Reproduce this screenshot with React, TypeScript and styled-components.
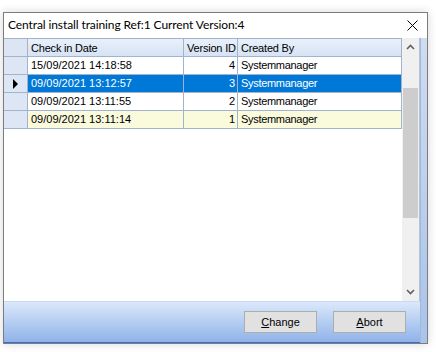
import React from "react";
import styled, { createGlobalStyle } from "styled-components";

const Global = createGlobalStyle`
  html, body { margin: 0; padding: 0; background: #ffffff; }
  body { width: 436px; height: 352px; overflow: hidden; }
  * { box-sizing: border-box; }
`;

const Screen = styled.div`
  padding: 12px 0 0 3px;
`;

const Window = styled.div`
  width: 425px;
  height: 332px;
  border: 1px solid #7d7d7d;
  background: #ffffff;
  box-shadow: 0 0 9px rgba(0, 0, 0, 0.16);
  display: flex;
  flex-direction: column;
`;

const TitleBar = styled.div`
  height: 25px;
  display: flex;
  align-items: center;
  justify-content: space-between;
  padding: 0 9px 0 4px;
  font-family: Lato, "Liberation Sans", sans-serif;
  font-size: 12px;
  letter-spacing: -0.1px;
  color: #000;
`;

const Title = styled.span`
  line-height: 1;
  padding-bottom: 1px;
`;

const Body = styled.div`
  flex: 1;
  display: flex;
`;

const Main = styled.div`
  width: 416px;
  display: flex;
  flex-direction: column;
`;

const RightStrip = styled.div`
  flex: 1;
  background: linear-gradient(#cfdcf0, #a9c3ea);
  border-left: 1px solid #a4b8d8;
`;

const GridArea = styled.div`
  height: 263px;
  display: flex;
  background: #ffffff;
`;

const Table = styled.div`
  width: 398px;
  display: grid;
  grid-template-columns: 24px 156px 54px 164px;
  grid-auto-rows: 18px;
  grid-template-rows: 19px;
  align-content: start;
  font-family: "Liberation Sans", Arial, sans-serif;
  font-size: 11px;
`;

const HeadCell = styled.div<{ $corner?: boolean }>`
  border-top: 1px solid #a3b3cb;
  border-right: 1px solid #a3b3cb;
  border-bottom: 1px solid #a3b3cb;
  background: ${(p) => (p.$corner ? "#dbe5f3" : "linear-gradient(#e9f0fa, #d6e3f4)")};
  display: flex;
  align-items: center;
  padding: 0 2px 0 3px;
  color: #000;
  white-space: nowrap;
  letter-spacing: -0.2px;
`;

type RowKind = "normal" | "selected" | "yellow";

const RowHeader = styled.div`
  border-right: 1px solid #a3b3cb;
  border-bottom: 1px solid #a3b3cb;
  background: #dce6f4;
  display: flex;
  align-items: center;
  padding-left: 9px;
`;

const Cell = styled.div<{ $kind: RowKind; $right?: boolean; $tight?: boolean }>`
  border-right: 1px solid #a3b3cb;
  border-bottom: 1px solid #a3b3cb;
  background: ${(p) =>
    p.$kind === "selected" ? "#0078d7" : p.$kind === "yellow" ? "#fafadc" : "#ffffff"};
  color: ${(p) => (p.$kind === "selected" ? "#ffffff" : "#000000")};
  display: flex;
  align-items: center;
  justify-content: ${(p) => (p.$right ? "flex-end" : "flex-start")};
  padding: 0 2px 1px 3px;
  white-space: nowrap;
  letter-spacing: ${(p) => (p.$tight ? "-0.3px" : "0")};
`;

const Arrow = styled.span`
  width: 0;
  height: 0;
  border-top: 5px solid transparent;
  border-bottom: 5px solid transparent;
  border-left: 5px solid #000;
`;

const ScrollBar = styled.div`
  width: 18px;
  background: #f0f0f0;
  display: flex;
  flex-direction: column;
  border-right: 1px solid #b3c4de;
`;

const ScrollButton = styled.div`
  height: 18px;
  display: flex;
  align-items: center;
  justify-content: center;
`;

const Track = styled.div`
  flex: 1;
  display: flex;
  flex-direction: column;
  padding: 32px 1px 0 1px;
`;

const Thumb = styled.div`
  height: 130px;
  background: #cdcdcd;
`;

const BottomPanel = styled.div`
  height: 42px;
  border-top: 1px solid #c9d9f1;
  border-bottom: 1px solid #3a6ad2;
  background: linear-gradient(#dbe8fb, #8fb3e8);
  display: flex;
  justify-content: flex-end;
  align-items: flex-start;
  gap: 16px;
  padding: 9px 14px 0 0;
`;

const Button = styled.button`
  width: 73px;
  height: 22px;
  background: #e1e1e1;
  border: 1px solid #adadad;
  font-family: "Liberation Sans", Arial, sans-serif;
  font-size: 11px;
  color: #000;
  padding: 0 0 1px 0;
  margin: 0;
  display: flex;
  align-items: center;
  justify-content: center;
`;

const rows: { date: string; id: number; by: string; kind: RowKind }[] = [
  { date: "15/09/2021 14:18:58", id: 4, by: "Systemmanager", kind: "normal" },
  { date: "09/09/2021 13:12:57", id: 3, by: "Systemmanager", kind: "selected" },
  { date: "09/09/2021 13:11:55", id: 2, by: "Systemmanager", kind: "normal" },
  { date: "09/09/2021 13:11:14", id: 1, by: "Systemmanager", kind: "yellow" },
];

const Chevron = ({ up }: { up?: boolean }) => (
  <svg width="9" height="6" viewBox="0 0 9 6">
    <path
      d={up ? "M1 5 L4.5 1.5 L8 5" : "M1 1 L4.5 4.5 L8 1"}
      fill="none"
      stroke="#606060"
      strokeWidth="1.6"
    />
  </svg>
);

export default function App() {
  return (
    <>
      <Global />
      <Screen>
        <Window>
          <TitleBar>
            <Title>Central install training Ref:1 Current Version:4</Title>
            <svg width="11" height="11" viewBox="0 0 11 11">
              <path d="M0.5 0.5 L10.5 10.5 M10.5 0.5 L0.5 10.5" stroke="#000" strokeWidth="1" />
            </svg>
          </TitleBar>
          <Body>
            <Main>
              <GridArea>
                <Table>
                  <HeadCell $corner />
                  <HeadCell>Check in Date</HeadCell>
                  <HeadCell>Version ID</HeadCell>
                  <HeadCell>Created By</HeadCell>
                  {rows.map((r) => (
                    <React.Fragment key={r.id}>
                      <RowHeader>{r.kind === "selected" && <Arrow />}</RowHeader>
                      <Cell $kind={r.kind}>{r.date}</Cell>
                      <Cell $kind={r.kind} $right>
                        {r.id}
                      </Cell>
                      <Cell $kind={r.kind} $tight>
                        {r.by}
                      </Cell>
                    </React.Fragment>
                  ))}
                </Table>
                <ScrollBar>
                  <ScrollButton>
                    <Chevron up />
                  </ScrollButton>
                  <Track>
                    <Thumb />
                  </Track>
                  <ScrollButton>
                    <Chevron />
                  </ScrollButton>
                </ScrollBar>
              </GridArea>
              <BottomPanel>
                <Button>
                  <span>
                    <u>C</u>hange
                  </span>
                </Button>
                <Button>
                  <span>
                    <u>A</u>bort
                  </span>
                </Button>
              </BottomPanel>
            </Main>
            <RightStrip />
          </Body>
        </Window>
      </Screen>
    </>
  );
}
